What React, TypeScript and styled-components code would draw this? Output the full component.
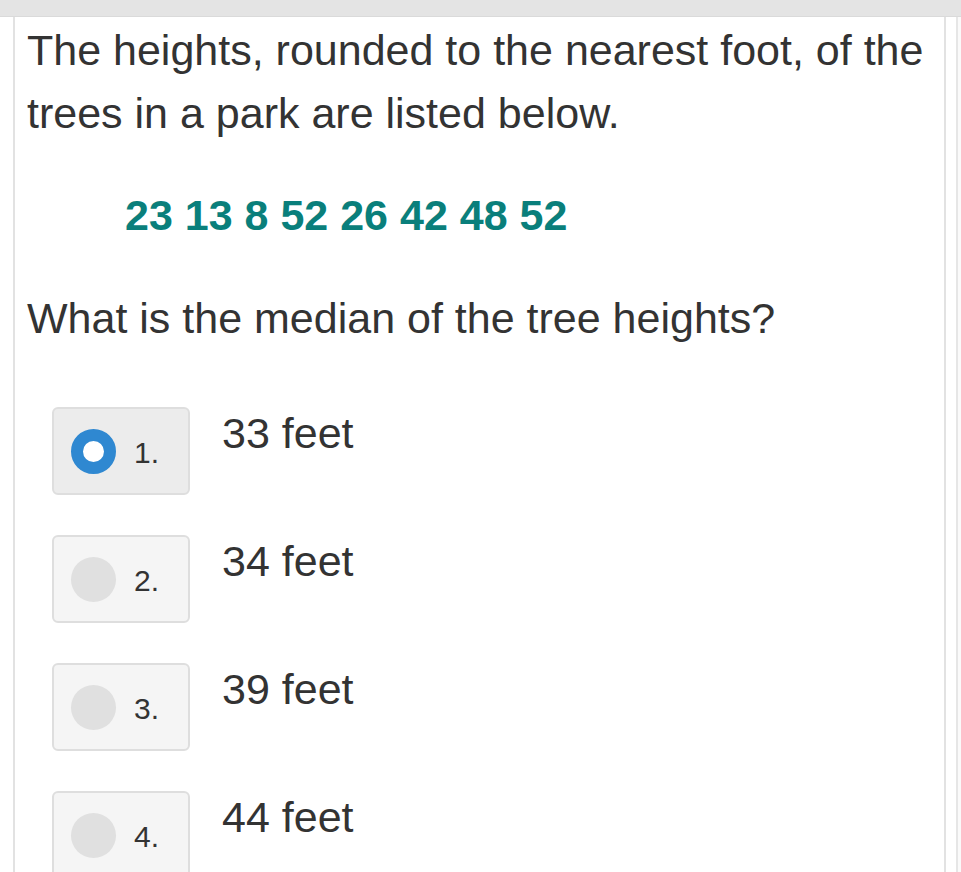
import styled, { createGlobalStyle } from "styled-components";

const answers = [
  { id: 1, text: "33 feet", selected: true },
  { id: 2, text: "34 feet", selected: false },
  { id: 3, text: "39 feet", selected: false },
  { id: 4, text: "44 feet", selected: false },
];

const App = () => {
  return (
    <>
      <GlobalStyle />
      <TopBar />
      <Page>
        <Panel>
          <Question>
            The heights, rounded to the nearest foot, of the trees in a park
            are listed below.
          </Question>
          <Data>23 13 8 52 26 42 48 52</Data>
          <Prompt>What is the median of the tree heights?</Prompt>
          <Options>
            {answers.map(({ id, text, selected }) => (
              <Option key={id}>
                <Choice $selected={selected}>
                  <Radio $selected={selected} />
                  <Number>{id}.</Number>
                </Choice>
                <Answer>{text}</Answer>
              </Option>
            ))}
          </Options>
        </Panel>
        <Gutter />
        <Rail />
      </Page>
    </>
  );
};

export default App;

const GlobalStyle = createGlobalStyle`
  html, body {
    margin: 0;
    padding: 0;
    background: #ffffff;
    overflow: hidden;
  }
  body {
    font-family: "Liberation Sans", Arial, sans-serif;
    color: #333333;
  }
`;

const TopBar = styled.div`
  height: 16px;
  background: #e4e4e4;
  border-bottom: 1px solid #dadada;
`;

const Page = styled.div`
  display: flex;
  height: 855px;
`;

const Panel = styled.main`
  margin-left: 13px;
  width: 917px;
  padding: 2px 0 0 12px;
  border-left: 2px solid #e2e2e2;
  border-right: 2px solid #e2e2e2;
  overflow: hidden;
`;

const Gutter = styled.div`
  width: 10px;
  background: #ffffff;
`;

const Rail = styled.div`
  flex: 1;
  border-left: 2px solid #e6e6e6;
  background: #fafafa;
`;

const Question = styled.p`
  margin: 0;
  font-size: 43px;
  line-height: 63px;
`;

const Data = styled.p`
  margin: 39px 0 0 98px;
  font-size: 43px;
  line-height: 63px;
  font-weight: bold;
  color: #0a7f7b;
`;

const Prompt = styled.p`
  margin: 40px 0 0;
  font-size: 43px;
  line-height: 63px;
`;

const Options = styled.div`
  display: flex;
  flex-direction: column;
  gap: 40px;
  margin: 57px 0 0 25px;
`;

const Option = styled.div`
  display: flex;
  align-items: flex-start;
  gap: 32px;
`;

const Choice = styled.div<{ $selected: boolean }>`
  box-sizing: border-box;
  width: 138px;
  height: 88px;
  display: flex;
  align-items: center;
  gap: 18px;
  padding-left: 17px;
  border: 2px solid #dedede;
  border-radius: 6px;
  background: ${(p) => (p.$selected ? "#ececec" : "#f5f5f5")};
`;

const Radio = styled.span<{ $selected: boolean }>`
  box-sizing: border-box;
  width: 45px;
  height: 45px;
  border-radius: 50%;
  flex-shrink: 0;
  background: ${(p) => (p.$selected ? "#ffffff" : "#e0e0e0")};
  border: ${(p) => (p.$selected ? "12.5px solid #2f88d1" : "none")};
`;

const Number = styled.span`
  font-size: 30px;
  line-height: 1;
  padding-top: 4px;
`;

const Answer = styled.span`
  font-size: 43px;
  line-height: 52px;
`;
